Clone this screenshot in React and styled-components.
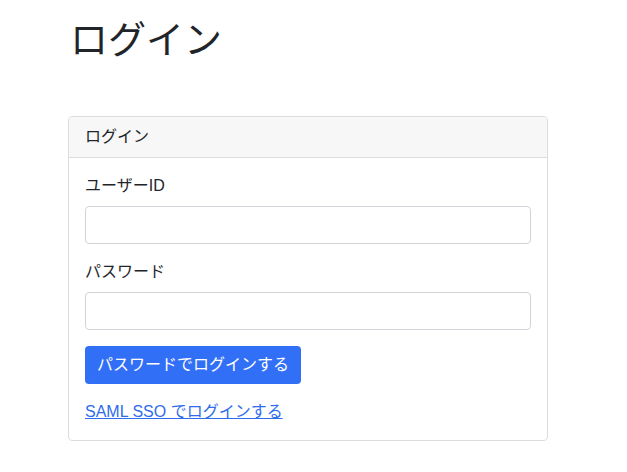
import React, { useState } from "react";
import styled, { createGlobalStyle } from "styled-components";

const GlobalStyle = createGlobalStyle`
  body {
    margin: 0;
    background: #fff;
    color: #212529;
    font-family: "Liberation Sans", "Noto Sans CJK JP", sans-serif;
    font-size: 16px;
    line-height: 24px;
  }
  * { box-sizing: border-box; }
`;

const Page = styled.div`
  width: 480px;
  margin-left: 68px;
  padding-top: 16px;
`;

const Title = styled.h1`
  margin: 0 0 52px;
  font-size: 38px;
  font-weight: 400;
  line-height: 48px;
  padding-left: 2px;
`;

const Card = styled.div`
  border: 1px solid #dcdcdf;
  border-radius: 4px;
  overflow: hidden;
`;

const CardHeader = styled.div`
  padding: 8px 16px;
  background: #f7f7f7;
  border-bottom: 1px solid #dcdcdf;
`;

const CardBody = styled.form`
  padding: 16px;
  display: flex;
  flex-direction: column;
  align-items: flex-start;
`;

const Field = styled.div`
  width: 100%;
  margin-bottom: 16px;
`;

const Label = styled.label`
  display: block;
  margin-bottom: 8px;
`;

const Input = styled.input`
  display: block;
  width: 100%;
  height: 38px;
  padding: 6px 12px;
  border: 1px solid #d0d3d7;
  border-radius: 4px;
  font: inherit;
  outline: none;
`;

const Button = styled.button`
  height: 38px;
  padding: 0 12px;
  border: none;
  border-radius: 4px;
  background: #316ff6;
  color: #fff;
  font: inherit;
  cursor: pointer;
`;

const SsoLink = styled.a`
  margin-top: 16px;
  color: #2f6cec;
  text-decoration: underline;
`;

const App = () => {
  const [userId, setUserId] = useState("");
  const [password, setPassword] = useState("");

  return (
    <>
      <GlobalStyle />
      <Page>
        <Title>ログイン</Title>
        <Card>
          <CardHeader>ログイン</CardHeader>
          <CardBody onSubmit={(e) => e.preventDefault()}>
            <Field>
              <Label htmlFor="user">ユーザーID</Label>
              <Input id="user" value={userId} onChange={(e) => setUserId(e.target.value)} />
            </Field>
            <Field>
              <Label htmlFor="pass">パスワード</Label>
              <Input
                id="pass"
                type="password"
                value={password}
                onChange={(e) => setPassword(e.target.value)}
              />
            </Field>
            <Button type="submit">パスワードでログインする</Button>
            <SsoLink href="#">SAML SSO でログインする</SsoLink>
          </CardBody>
        </Card>
      </Page>
    </>
  );
};

export default App;
